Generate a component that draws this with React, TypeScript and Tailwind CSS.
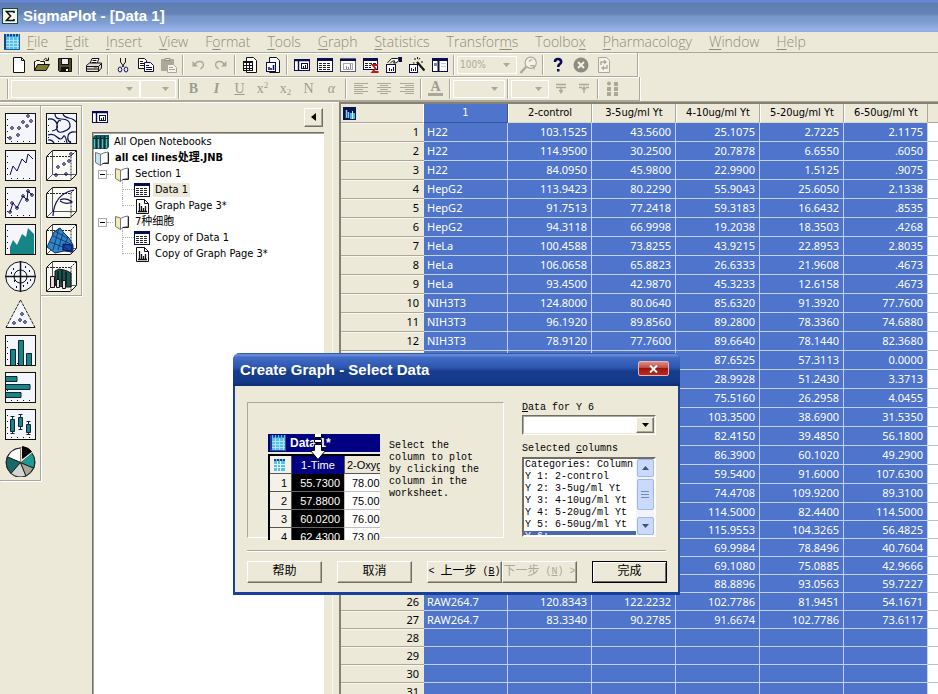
import React from "react";

type Children = { children?: React.ReactNode };

const INK = "#0b0b50";
const TEAL = "#168585";

/* ---------- worksheet data ---------- */

const columns = ["1", "2-control", "3-5ug/ml Yt", "4-10ug/ml Yt", "5-20ug/ml Yt", "6-50ug/ml Yt"];

const rows: string[][] = [
  ["H22", "103.1525", "43.5600", "25.1075", "2.7225", "2.1175"],
  ["H22", "114.9500", "30.2500", "20.7878", "6.6550", ".6050"],
  ["H22", "84.0950", "45.9800", "22.9900", "1.5125", ".9075"],
  ["HepG2", "113.9423", "80.2290", "55.9043", "25.6050", "2.1338"],
  ["HepG2", "91.7513", "77.2418", "59.3183", "16.6432", ".8535"],
  ["HepG2", "94.3118", "66.9998", "19.2038", "18.3503", ".4268"],
  ["HeLa", "100.4588", "73.8255", "43.9215", "22.8953", "2.8035"],
  ["HeLa", "106.0658", "65.8823", "26.6333", "21.9608", ".4673"],
  ["HeLa", "93.4500", "42.9870", "45.3233", "12.6158", ".4673"],
  ["NIH3T3", "124.8000", "80.0640", "85.6320", "91.3920", "77.7600"],
  ["NIH3T3", "96.1920", "89.8560", "89.2800", "78.3360", "74.6880"],
  ["NIH3T3", "78.9120", "77.7600", "89.6640", "78.1440", "82.3680"],
  ["", "", "", "87.6525", "57.3113", "0.0000"],
  ["", "", "", "28.9928", "51.2430", "3.3713"],
  ["", "", "", "75.5160", "26.2958", "4.0455"],
  ["", "", "", "103.3500", "38.6900", "31.5350"],
  ["", "", "", "82.4150", "39.4850", "56.1800"],
  ["", "", "", "86.3900", "60.1020", "49.2900"],
  ["", "", "", "59.5400", "91.6000", "107.6300"],
  ["", "", "", "74.4708", "109.9200", "89.3100"],
  ["", "", "", "114.5000", "82.4400", "114.5000"],
  ["", "", "", "115.9553", "104.3265", "56.4825"],
  ["", "", "", "69.9984", "78.8496", "40.7604"],
  ["", "", "", "69.1080", "75.0885", "42.9666"],
  ["", "", "", "88.8896", "93.0563", "59.7227"],
  ["RAW264.7", "120.8343", "122.2232", "102.7786", "81.9451", "54.1671"],
  ["RAW264.7", "83.3340", "90.2785", "91.6674", "102.7786", "73.6117"],
  ["", "", "", "", "", ""],
  ["", "", "", "", "", ""],
  ["", "", "", "", "", ""],
  ["", "", "", "", "", ""],
];

/* ---------- small icons ---------- */

function Ico({ children, size = 16 }: Children & { size?: number }) {
  return (
    <svg width={size} height={size} viewBox="0 0 16 16" fill="none" stroke="#111" aria-hidden="true" className="shrink-0">
      {children}
    </svg>
  );
}

const SheetGlyph = () => (
  <Ico>
    <rect x="0.5" y="1.5" width="15" height="13" fill="#fff" stroke={INK} />
    <path d="M0 2.5h16M0 3.5h16" stroke={INK} />
    <path d="M2 6.5h12M2 8.5h12M2 10.5h12M2 12.5h12" stroke="#222" strokeDasharray="3 1" />
  </Ico>
);

const GraphPageGlyph = () => (
  <Ico>
    <path d="M2.5 1.500h8l4 4v10h-12z" fill="#fff" />
    <path d="M10.500 1.500v4h4" />
    <path d="M5.500 5v8.500M7.500 8v5M9.500 10v3M11.500 8v5M4 13.500h9" strokeWidth="1.3" />
  </Ico>
);

const BookGlyph = ({ tint }: { tint: string }) => (
  <Ico>
    <path d="M1.500 2.500l5 1.500v11.500l-5-3z" fill={tint} stroke="#777" />
    <path d="M6.500 4.500q3-2 7.500-2.500v10.500q-5 0-7.500 3z" fill="#fff" stroke="#777" />
    <path d="M14.500 2.500v11h-6" stroke="#222" />
  </Ico>
);

const NotebooksGlyph = () => (
  <Ico>
    <path d="M0 3l2-2h14v12l-2 2h-14z" fill="#0f5f60" stroke="none" />
    <path d="M1.500 4v10M5.500 4v10M9.500 4v10M13.500 3v11" stroke="#5fc0c0" />
    <path d="M3.500 2v13M7.500 2v13M11.500 2v13M0 4.500h16" stroke="#062c30" />
  </Ico>
);

const GridGlyph = () => (
  <Ico>
    <rect width="16" height="16" fill="#58bfe8" stroke="none" />
    <path d="M0 1h16" stroke="#1b3f90" strokeWidth="3" strokeDasharray="2 1" />
    <path d="M1 0v16" stroke="#1b3f90" strokeWidth="2" />
    <path d="M5.500 3v13M9.500 3v13M13.500 3v13M2 6.500h14M2 9.500h14M2 12.500h14" stroke="#a8e2f8" />
    <path d="M15.500 0v16M0 15.500h16" stroke="#1d5f9a" />
  </Ico>
);

const PanelGlyph = () => (
  <Ico>
    <rect x="0.5" y="2.500" width="15" height="11" fill="#fff" stroke={INK} />
    <path d="M0 3.500h16M4.500 3v11" stroke={INK} strokeWidth="1.400" />
    <rect x="7.500" y="6.500" width="6" height="5" stroke={INK} />
    <path d="M9.500 11v-2M11.500 11v-3" stroke={INK} />
  </Ico>
);

const icons: Record<string, React.ReactNode> = {
  New: (
    <Ico>
      <path d="M2.500 0.500h8l3 3v12h-11z" fill="#fff" />
      <path d="M10.500 0.500v3h3" />
    </Ico>
  ),
  Open: (
    <Ico>
      <path d="M0.500 13.500v-9h1l1-1h3l1 1h4v3" fill="#fffbe0" />
      <path d="M0.500 13.500l3-6h12l-3.500 6z" fill="#7c7c2c" />
      <path d="M9.500 3q2-3 4-0.500M14.500 0.500v3h-3" />
    </Ico>
  ),
  Save: (
    <Ico>
      <path d="M1.500 1.500h13v13h-12l-1-1z" fill="#4c4c28" />
      <rect x="4.500" y="1.500" width="7" height="6" fill="#eee" />
      <rect x="4.500" y="10.500" width="7" height="4" fill="#111" />
      <path d="M10 12v2" stroke="#fff" strokeWidth="2" />
    </Ico>
  ),
  Print: (
    <Ico>
      <path d="M4 6.500l2-5h7l-2 5" fill="#fff" />
      <path d="M6.500 3.500h4M6 5.500h4" />
      <path d="M0.500 8.500l3-2.500h12v5l-3 3.500h-12z" fill="#ddd" />
      <path d="M0.500 9.500h12l3-3M0.500 12h12M12.500 9.500v5" />
      <path d="M8 10.500h3" stroke="#a89000" />
    </Ico>
  ),
  Cut: (
    <Ico>
      <path d="M5.500 1v4l3.500 5M10.500 1v4l-3.500 5" />
      <ellipse cx="5" cy="12.500" rx="1.800" ry="2.500" stroke="#10107c" />
      <ellipse cx="11" cy="12.500" rx="1.800" ry="2.500" stroke="#10107c" />
    </Ico>
  ),
  Copy: (
    <Ico>
      <path d="M0.500 1.500h6l2 2v8h-8z" fill="#fff" />
      <path d="M2 4.500h3M2 6.500h5M2 8.500h5" />
      <path d="M6.500 5.500h6l3 3v6h-9z" fill="#fff" stroke={INK} />
      <path d="M8 8.500h3M8 10.500h6M8 12.500h6" stroke={INK} />
    </Ico>
  ),
  Paste: (
    <Ico>
      <path d="M0.500 2.500h12v11h-12z" fill="#aca899" stroke="#aca899" />
      <path d="M4 3.500h5v-2h-5z" fill="#ece9d8" stroke="#8f8c80" />
      <path d="M6.500 7.500h6l3 3v5h-9z" fill="#f4f2e8" stroke="#aca899" />
      <path d="M8 10.500h4M8 12.500h6" stroke="#aca899" />
    </Ico>
  ),
  Undo: (
    <Ico>
      <path d="M4.500 9q1-5 6-4.500q4 1 2.500 5l-2.500 2.500" stroke="#aca899" strokeWidth="1.400" />
      <path d="M2.500 4v5.500h5.500z" fill="#aca899" stroke="none" />
    </Ico>
  ),
  Redo: (
    <Ico>
      <path d="M11.500 9q-1-5-6-4.500q-4 1-2.500 5l2.500 2.500" stroke="#aca899" strokeWidth="1.400" />
      <path d="M13.500 4v5.500h-5.500z" fill="#aca899" stroke="none" />
    </Ico>
  ),
  "New worksheet": (
    <Ico>
      <path d="M4.500 0.500h7l3 3v12h-10z" fill="#fff" />
      <rect x="1.500" y="4.500" width="9" height="9" fill="#fff" />
      <path d="M1.500 5.500h9M1.500 8.500h9M1.500 11.500h9M4.500 5v9M7.500 5v9" />
    </Ico>
  ),
  "New graph page": (
    <Ico>
      <path d="M4.500 0.500h7l3 3v12h-10z" fill="#fff" />
      <rect x="1.500" y="5.500" width="9" height="9" fill="#fff" stroke={INK} />
      <path d="M4 13v-3M6 13v-2M8.500 13v-5" stroke={INK} strokeWidth="1.500" />
    </Ico>
  ),
  "View notebook": <PanelGlyph />,
  "View worksheet": <SheetGlyph />,
  "View page": (
    <Ico>
      <rect x="0.500" y="1.500" width="15" height="13" fill="#fff" stroke="#5a5a78" />
      <path d="M0 3h16" stroke={INK} strokeWidth="2" />
      <rect x="3.500" y="6.500" width="9" height="6" stroke="#aaa" />
      <path d="M6.500 12v-3M8.500 12v-2M10.500 12v-5" stroke="#8a8a9c" />
    </Ico>
  ),
  Statistics: (
    <Ico>
      <rect x="0.500" y="1.500" width="14" height="11" fill="#fff" stroke={INK} />
      <path d="M0 2.500h15M0 3.500h15" stroke={INK} />
      <path d="M2 6.500h11M2 8.500h6M2 10.500h6" stroke="#222" strokeDasharray="3 1" />
      <path d="M15 8h-5.500l3 3.500-3 3.500h6" stroke="#c01818" strokeWidth="1.800" />
    </Ico>
  ),
  "Graph properties": (
    <Ico>
      <rect x="0.500" y="7.500" width="9" height="8" fill="#fff" stroke={INK} />
      <path d="M3.500 14v-3M5.500 14v-2M7.500 14v-4" stroke={INK} />
      <path d="M1.500 6l4-4.500h6l2 1.500-3.500 3h-2.500l1.500-2h-2.500l-2.500 2.500" fill="#fff" />
      <path d="M12 0h4v5h-3z" fill={INK} stroke="none" />
    </Ico>
  ),
  "Graph wizard": (
    <Ico>
      <rect x="0.500" y="7.500" width="8" height="8" fill="#fff" stroke={INK} />
      <path d="M2.500 14v-3M4.500 14v-2M6.500 14v-4" stroke={INK} />
      <path d="M8 5l7.500 8.500" strokeWidth="2.200" />
      <path d="M6 1v2M11 1l-1 1.500M4 6h1.500M12 5h2M8.500 0v2" />
    </Ico>
  ),
  "Object window": (
    <Ico>
      <rect x="0.500" y="1.500" width="15" height="13" fill="#fff" stroke={INK} />
      <path d="M0 3h16M6.500 3v12" stroke={INK} strokeWidth="2" />
      <rect x="2" y="6" width="3" height="3" fill="#888" stroke="none" />
      <path d="M9 6.500h5M9 9.500h5" stroke="#c8c8c8" />
    </Ico>
  ),
  Zoom: (
    <Ico size={18}>
      <circle cx="9.500" cy="6" r="5" fill="#f4f2e8" stroke="#aca899" />
      <path d="M5.500 9.500l-5 5.500" stroke="#aca899" strokeWidth="2" />
      <path d="M12.500 12v-3.500h-3.500M8 5q1-2 3-1.500" stroke="#aca899" />
    </Ico>
  ),
  Help: (
    <Ico>
      <path d="M5 5q0-3 3-3t3.200 2.800q0 1.500-1.500 2.400-1.500 1-1.500 2.800" stroke={INK} strokeWidth="2.600" />
      <path d="M7 12h2.500v2.500h-2.500z" fill={INK} stroke="none" />
    </Ico>
  ),
  Stop: (
    <Ico>
      <circle cx="8" cy="8" r="7.500" fill="#8e8b80" stroke="none" />
      <path d="M5 5l6 6M11 5l-6 6" stroke="#f4f2e8" strokeWidth="2" />
    </Ico>
  ),
  Refresh: (
    <Ico>
      <path d="M2.500 0.500h8l3 3v12h-11z" fill="#f4f2e8" stroke="#aca899" />
      <path d="M5 8v-3h4M11 8v3h-4" stroke="#aca899" strokeWidth="1.400" />
      <path d="M8 2.500l3 2.500-3 2.500zM8 8.500v5l-3-2.500z" fill="#aca899" stroke="none" />
    </Ico>
  ),
  "Align left": (
    <Ico>
      <path d="M1 2.500h14M1 4.500h9M1 6.500h14M1 8.500h9M1 10.500h14M1 12.500h9" stroke="#aca899" />
    </Ico>
  ),
  "Align center": (
    <Ico>
      <path d="M1 2.500h14M4 4.500h8M1 6.500h14M4 8.500h8M1 10.500h14M4 12.500h8" stroke="#aca899" />
    </Ico>
  ),
  "Align right": (
    <Ico>
      <path d="M1 2.500h14M6 4.500h9M1 6.500h14M6 8.500h9M1 10.500h14M6 12.500h9" stroke="#aca899" />
    </Ico>
  ),
  "Space below": (
    <Ico>
      <path d="M3 3.500h10M3 6.500h10M8 6v4" stroke="#aca899" strokeWidth="1.300" />
      <path d="M5.500 9h5l-2.500 4z" fill="#aca899" stroke="none" />
    </Ico>
  ),
  "Space above": (
    <Ico>
      <path d="M3 3.500h10M3 6.500h3M10 6.500h3M8 7v5" stroke="#aca899" strokeWidth="1.300" />
      <path d="M5.500 8.500h5l-2.500-4z" fill="#aca899" stroke="none" />
    </Ico>
  ),
  Symbols: (
    <Ico>
      <circle cx="4" cy="2.500" r="2" fill="#aca899" stroke="none" />
      <path d="M9 1h4v4h-4zM2 6h4v4h-4zM9 6h4v4h-4zM2 11h4v4h-4zM9 11h4v4h-4z" fill="#aca899" stroke="none" />
    </Ico>
  ),
};

/* ---------- toolbar parts ---------- */

const Sep = () => (
  <div className="flex w-[6px] shrink-0 justify-center">
    <div className="h-[20px] w-[2px] border-l border-r border-l-[#aca899] border-r-white" />
  </div>
);

const Tool = ({ name }: { name: string }) => (
  <button type="button" aria-label={name} className="flex h-[22px] w-[23px] shrink-0 items-center justify-center">
    {icons[name]}
  </button>
);

const Tools = ({ names }: { names: string[] }) => (
  <>
    {names.map((n) => (
      <Tool key={n} name={n} />
    ))}
  </>
);

const Letter = ({ label, children }: Children & { label: string }) => (
  <button
    type="button"
    disabled
    aria-label={label}
    className="flex h-[22px] w-[23px] shrink-0 items-center justify-center font-['Liberation_Serif',serif] text-[14px] leading-none text-[#9f9c8f]"
  >
    {children}
  </button>
);

const Combo = ({ label, width, value = "" }: { label: string; width: string; value?: string }) => (
  <div className={"relative flex h-[18px] shrink-0 border border-white " + width}>
    <select
      disabled
      aria-label={label}
      className="h-full w-full appearance-none bg-transparent pl-[2px] text-[10px] leading-none text-[#aca899] opacity-100"
    >
      <option>{value}</option>
    </select>
    <svg width="7" height="4" className="pointer-events-none absolute top-[6px] right-[6px]" aria-hidden="true">
      <path d="M0 0h7L3.500 4z" fill="#aca899" />
    </svg>
  </div>
);

const Toolbar = ({ children, width, label }: Children & { width: string; label: string }) => (
  <div
    role="toolbar"
    aria-label={label}
    className={
      "flex h-[24px] items-center border-r border-b border-[#aca899] shadow-[inset_0_1px_0_#fff,1px_0_0_#fff] " + width
    }
  >
    {children}
  </div>
);

/* ---------- menu ---------- */

const menus: [string, string, string][] = [
  ["", "F", "ile"],
  ["", "E", "dit"],
  ["", "I", "nsert"],
  ["", "V", "iew"],
  ["F", "o", "rmat"],
  ["", "T", "ools"],
  ["", "G", "raph"],
  ["", "S", "tatistics"],
  ["Transfor", "m", "s"],
  ["Toolbo", "x", ""],
  ["", "P", "harmacology"],
  ["", "W", "indow"],
  ["", "H", "elp"],
];

/* ---------- graph type palette ---------- */

const Frame = () => (
  <>
    <rect x="0.500" y="0.500" width="30" height="30" fill="#f4f6fb" stroke="#111" />
    <path d="M2 6.500h1M2 12.500h1M2 18.500h1M2 24.500h1M6.500 28v1M12.500 28v1M18.500 28v1M24.500 28v1" stroke="#111" />
  </>
);

const Cube = () => (
  <>
    <path d="M0.500 6.500l6-6h24v24l-6 6h-24z" fill="#fbfbf6" stroke="#111" />
    <path d="M6.500 1v23.500h24M6.500 24.500l-6 6" stroke="#555" />
    <path d="M1 6.500h24v24M24.500 6.500l6-6" stroke="#222" strokeDasharray="2 1" />
  </>
);

const dots = (pts: number[][], r = 1.3) =>
  pts.map(([x, y]) => <circle key={x + "-" + y} cx={x} cy={y} r={r} fill="none" stroke={INK} />);

const palette1: [string, React.ReactNode][] = [
  ["Scatter plot", <><Frame />{dots([[5, 25], [7, 15], [13, 22], [14, 15], [18, 9], [22, 13], [23, 3], [26, 8]])}</>],
  ["Line plot", <><Frame /><path d="M5 25l3-9 4 5 5-12 4 4 2-9 5 5" stroke={INK} /></>],
  ["Line and scatter plot", <><Frame /><path d="M5 25l3-9 4 5 6-12 4 4 1-9 4 4" stroke={INK} />{dots([[5, 25], [7, 16], [12, 21], [18, 9], [22, 13], [23, 4], [27, 8]])}</>],
  ["Area plot", <><Frame /><path d="M5 30V23l3-7 4 5 5-11 4 3 2-9 6 6v20z" fill={TEAL} /></>],
  [
    "Polar plot",
    <>
      <circle cx="15.500" cy="15.500" r="14.800" fill="#f4f6fb" stroke="#111" />
      <circle cx="15.500" cy="15.500" r="6.500" stroke="#111" />
      <path d="M0 15.500h31M15.500 0v31" stroke="#111" strokeWidth="1.500" />
      <path d="M8 8h1M20 6h1M24 10h1M9 20h1M6 12h1M22 22h1M18 25h1M11 26h1M25 19h1" stroke={INK} strokeWidth="1.800" />
    </>,
  ],
  ["Ternary plot", <><path d="M15.500 2L30 29.500H1z" fill="#f4f6fb" stroke="#222" strokeDasharray="3 1" /><path d="M1 29.500h29" stroke="#111" />{dots([[17, 16], [15, 22], [9, 25], [20, 24]])}</>],
  ["Vertical bar chart", <><Frame /><path d="M5.500 30V14.500h5V30M13.500 30V5.500h5V30M21.500 30V18.500h5V30" fill={TEAL} stroke="#123" /></>],
  ["Horizontal bar chart", <><Frame /><path d="M1 4.500h11v5H1M1 12.500h24v5H1M1 20.500h15v5H1" fill={TEAL} stroke="#123" /></>],
  ["Box plot", <><Frame /><path d="M7.500 7v18M15.500 5v15M23.500 12v13M5.500 7.500h4M5.500 24.500h4M13.500 5.500h4M13.500 20.500h4M21.500 12.500h4M21.500 25.500h4" stroke="#123" /><path d="M5.500 10.500h4v12h-4zM13.500 8.500h4v9h-4zM21.500 15.500h4v8h-4z" fill={TEAL} stroke="#123" /></>],
  [
    "Pie chart",
    <>
      <circle cx="15.500" cy="16.500" r="14.500" fill="#fff" stroke="#222" />
      <path d="M15.500 16.500V2Q6 3 2.500 11z" fill="#fff" stroke="#222" />
      <path d="M15.500 16.500L2.500 11Q-1 20 6 27.500z" fill="#17696b" stroke="#222" />
      <path d="M15.500 16.500L6 27.500Q13 33 21 30z" fill="#d4d4d0" stroke="#222" />
      <path d="M15.500 16.500L21 30Q26 27 28.500 22z" fill="#aaa69c" stroke="#222" />
      <path d="M15.500 16.500L28.500 22Q31.500 14 27 7z" fill="#1c9a96" stroke="#222" />
      <path d="M15.500 16.500L27 7Q22 2 15.500 2z" fill="#ece9d8" stroke="none" />
      <path d="M17.500 12.500V0.500q6 1 9 5z" fill="#000" stroke="#000" />
    </>,
  ],
];

const palette2: [string, React.ReactNode][] = [
  [
    "Contour plot",
    <>
      <Frame />
      <path
        d="M2 6q7-1 9 5t-5 7M9 1q0 5 6 5t8 3q3 5-2 8t-8 2-2-7 4-4M17 1q1 3 6 4t7 4M2 22q5-2 9 2t6 0 4 6M30 19q-7-1-8 4t3 7M2 27q4-1 6 3"
        stroke={INK}
        strokeWidth="1.200"
      />
    </>,
  ],
  ["3D scatter plot", <><Cube />{dots([[10, 25], [20, 24], [12, 17], [18, 14], [23, 11], [25, 4]])}</>],
  ["3D line plot", <><Cube /><path d="M7 29q1-22 21-26M14 13q6-3 12 2-6 3-12-1" stroke={INK} strokeWidth="1.200" /></>],
  [
    "Mesh plot",
    <>
      <Cube />
      <path d="M1 23L8 8l6-4 4 5 5 5 4 7v7l-9-1-9 2z" fill="#2f86c0" stroke="#0d2c70" />
      <path d="M17 20l9 1v6l-9-1z" fill="#1846a8" stroke={INK} />
      <path d="M4 18l18 7M7 12l18 8M9 7l12 7M13 4l-6 22M17 9l-5 17M22 13l-5 13" stroke="#0d2c70" strokeWidth="0.800" />
    </>,
  ],
  [
    "3D bar chart",
    <>
      <Cube />
      <path d="M9 24V10l4-2 5 1 3 1 4 2v14h-8z" fill="#1d5350" stroke="#111" />
      <path d="M12 10v12M16 9v13M20 11v13" stroke="#071c1b" strokeWidth="1.500" />
      <path d="M4.500 15.500h4v11h-4zM10.500 18.500h3v8h-3zM16.500 19.500h3v8h-3z" fill="#e9dcd8" stroke="#111" />
    </>,
  ],
];

const Palette = ({ items, label }: { items: [string, React.ReactNode][]; label: string }) => (
  <div
    role="toolbar"
    aria-label={label}
    className="flex w-[41px] flex-col items-center gap-[6px] self-start border-t border-r border-b border-[#aca899] pt-[7px] pb-[3px] shadow-[inset_0_1px_0_#fff,1px_1px_0_#fff]"
  >
    {items.map(([name, art]) => (
      <button key={name} type="button" aria-label={name} className="size-[31px]">
        <svg width="31" height="31" viewBox="0 0 31 31" fill="none" aria-hidden="true">
          {art}
        </svg>
      </button>
    ))}
  </div>
);

/* ---------- notebook tree ---------- */

const Expander = () => (
  <button
    type="button"
    aria-label="Collapse"
    className="flex size-[9px] shrink-0 items-center justify-center border border-[#a9a9a9] bg-white"
  >
    <span className="h-px w-[5px] bg-black" />
  </button>
);

const SectionRow = ({ name }: { name: string }) => (
  <div className="flex h-[16px] items-center pl-[5px]">
    <Expander />
    <span className="mr-px w-[6px] border-t border-dotted border-[#b0b0b0]" />
    <BookGlyph tint="#f2ecb4" />
    <span className="ml-[5px]">{name}</span>
  </div>
);

const LeafRow = ({ name, icon, active, last }: { name: string; icon: React.ReactNode; active?: boolean; last?: boolean }) => (
  <div className="flex h-[16px] items-center pl-[29px]">
    <span className="flex h-full w-[12px] flex-col border-l border-dotted border-[#b0b0b0]">
      <span className="h-[8px] border-b border-dotted border-[#b0b0b0]" />
      {last && <span className="-ml-px h-[8px] bg-white" />}
    </span>
    {icon}
    <span className={active ? "ml-[3px] bg-[#ece9d8] px-[2px] leading-[14px]" : "ml-[5px]"}>{name}</span>
  </div>
);

/* ---------- worksheet ---------- */

const Worksheet = () => (
  <div className="min-w-0 flex-1 overflow-hidden border-t-2 border-l-2 border-[#848174] bg-white">
    <table className="w-[680px] table-fixed border-separate border-spacing-0 text-[11px] leading-[14px]">
      <colgroup>
        <col className="w-[83px]" />
        {columns.map((c) => (
          <col key={c} className="w-[84px]" />
        ))}
        <col />
      </colgroup>
      <thead>
        <tr className="h-[19px]">
          <th className="border-r border-b border-[#aca899] border-r-white bg-[#ece9d8] p-0 pl-[2px]">
            <svg width="13" height="13" aria-hidden="true">
              <rect width="13" height="13" fill="#06164e" />
              <path d="M3.500 3v8M5.500 5v6" stroke="#7fd0f4" strokeWidth="1.500" />
              <path d="M7 6h5v6H7z" fill="#4fb4ec" />
              <path d="M9.500 4v8" stroke="#c8f0ff" />
            </svg>
          </th>
          {columns.map((c, i) => (
            <th
              key={c}
              scope="col"
              className={
                i === 0
                  ? "border-r border-b border-[#3a5698] bg-[#4e74cc] p-0 font-normal text-white"
                  : "border-r border-b border-l border-[#aca899] border-b-[#dad6c6] border-l-white bg-[#ece9d8] p-0 text-center font-normal text-black"
              }
            >
              {c}
            </th>
          ))}
          <th className="border-b border-[#aca899] bg-[#ece9d8] p-0" />
        </tr>
      </thead>
      <tbody className="font-['Noto_Sans',sans-serif]">
        {rows.map((r, i) => (
          <tr key={i} className={i < 20 ? "h-[19px]" : "h-[18px]"}>
            <th
              scope="row"
              className="border-b border-[#aca899] bg-[#ece9d8] p-0 pr-[5px] text-right font-normal text-black shadow-[inset_0_1px_0_#f8f7f0]"
            >
              {i + 1}
            </th>
            {r.map((v, j) => (
              <td
                key={j}
                className={
                  j === 0
                    ? "border-r border-b border-[#c3d0f0] bg-[#4e74cc] p-0 pl-[3px] text-left text-white"
                    : "border-r border-b border-[#c3d0f0] bg-[#4e74cc] p-0 pr-[4px] text-right text-white"
                }
              >
                {v}
              </td>
            ))}
            <td className="border-b border-[#c0c0c0] p-0" />
          </tr>
        ))}
      </tbody>
    </table>
  </div>
);

/* ---------- dialog ---------- */

const raised =
  "border border-t-white border-l-white border-r-[#716f64] border-b-[#716f64] bg-[#ece9d8] shadow-[inset_-1px_-1px_0_#aca899]";

const DialogButton = ({ children, disabled, primary }: Children & { disabled?: boolean; primary?: boolean }) => (
  <button
    type="button"
    disabled={disabled}
    className={
      "flex h-[22px] w-[75px] shrink-0 items-center justify-center text-[10px] leading-none whitespace-pre " +
      (primary ? "border border-black bg-[#ece9d8] shadow-[inset_1px_1px_0_#fff,inset_-1px_-1px_0_#716f64]" : raised) +
      (disabled ? " text-[#aca899]" : " text-black")
    }
  >
    {children}
  </button>
);

const Han = ({ children }: Children) => <span className="text-[12px]">{children}</span>;

const sampleRows = [
  ["1", "55.7300", "78.00"],
  ["2", "57.8800", "75.00"],
  ["3", "60.0200", "76.00"],
  ["4", "62.4300", "73.00"],
];

const Sample = () => (
  <div className="relative mt-[31px] ml-[20px] h-[106px] w-[112px] shrink-0 overflow-hidden font-['Liberation_Sans',Arial,sans-serif] text-[12px]">
    <div className="flex h-[18px] items-center gap-[4px] bg-[#000080] pl-[2px] font-bold text-white">
      <GridGlyph />
      Data 1*
    </div>
    <table className="mt-[2px] w-[120px] table-fixed border-separate border-spacing-0 border-t-2 border-l-2 border-black text-[11px] leading-[14px]">
      <colgroup>
        <col className="w-[22px]" />
        <col className="w-[52px]" />
        <col />
      </colgroup>
      <thead>
        <tr className="h-[18px]">
          <th className="border-r border-b border-[#555] bg-[#f4f2e8] p-0 pl-[4px]">
            <svg width="11" height="12" aria-hidden="true">
              <rect width="11" height="12" fill="#58bfe8" />
              <path d="M0 1h11" stroke="#1b3f90" strokeWidth="2" strokeDasharray="2 1" />
              <path d="M3.500 2v10M6.500 2v10M0 5.500h11M0 8.500h11" stroke="#e3f7ff" />
            </svg>
          </th>
          <th className="bg-[#000080] p-0 text-center font-normal text-white">1-Time</th>
          <th className="border-b border-l border-[#555] bg-[#ece9d8] p-0 pl-[2px] text-left font-normal whitespace-nowrap">2-Oxyg</th>
        </tr>
      </thead>
      <tbody>
        {sampleRows.map(([n, a, b]) => (
          <tr key={n} className="h-[18px]">
            <th className="border-r border-b border-[#555] bg-[#f4f2e8] p-0 pr-[4px] text-right font-normal">{n}</th>
            <td className="border-b border-[#666] bg-black p-0 pr-[4px] text-right text-white">{a}</td>
            <td className="border-b border-l border-[#c0c0c0] bg-white p-0 pl-[7px] text-left">{b}</td>
          </tr>
        ))}
      </tbody>
    </table>
    <svg width="16" height="28" viewBox="0 0 16 28" className="absolute -top-[1px] left-[42px]" aria-hidden="true">
      <path d="M4.500 0.500h7v4h-7zM4.500 6.500h7v3h-7z" fill="#fff" stroke="#000" />
      <path d="M4.500 11.500h7v6h4l-7.500 9-7.500-9h4z" fill="#fff" stroke="#000" />
    </svg>
  </div>
);

const selected = [
  "Categories: Column",
  "Y 1: 2-control",
  "Y 2: 3-5ug/ml Yt",
  "Y 3: 4-10ug/ml Yt",
  "Y 4: 5-20ug/ml Yt",
  "Y 5: 6-50ug/ml Yt",
  "Y 6:",
];

const xpThumb = "flex w-[17px] items-center justify-center rounded-[2px] border border-[#9db8f0] bg-[#cbdafc]";

const Dialog = () => (
  <section
    role="dialog"
    aria-labelledby="dialog-title"
    className="absolute top-[353px] left-[233px] flex w-[447px] flex-col rounded-t-[7px] border-2 border-t-0 border-b-[3px] border-[#16409c] bg-[#ece9d8] font-['Liberation_Mono','Noto_Sans_CJK_SC',monospace] text-[10px] leading-[12px] text-black"
  >
    <header className="-mx-[2px] flex h-[33px] items-center justify-between rounded-t-[7px] bg-[linear-gradient(180deg,#1c3f94_0%,#6d92dd_5%,#426bc4_14%,#2c55b0_45%,#173c8c_55%,#15398a_88%,#0f2c70_100%)] pr-[11px] pl-[7px]">
      <h2 id="dialog-title" className="font-['Liberation_Sans',Arial,sans-serif] text-[15px] font-bold text-white">
        Create Graph - Select Data
      </h2>
      <button
        type="button"
        aria-label="Close"
        className="mb-[2px] flex h-[15px] w-[31px] items-center justify-center rounded-[2px] border border-[#e8b8b0] bg-[linear-gradient(180deg,#d89088_0%,#c04840_45%,#a01410_50%,#b82c20_100%)]"
      >
        <svg width="9" height="8" aria-hidden="true">
          <path d="M1 0.500l7 7M8 0.500l-7 7" stroke="#fff" strokeWidth="2" />
        </svg>
      </button>
    </header>

    <div className="flex gap-[18px] px-[12px] pt-[16px]">
      <div className="flex h-[136px] w-[257px] shrink-0 border border-[#aca899] border-r-white border-b-white">
        <Sample />
        <p className="mt-[37px] ml-[9px] w-[100px]">Select the column to plot by clicking the column in the worksheet.</p>
      </div>

      <div className="flex w-[134px] flex-col">
        <label htmlFor="data-for">
          <u>D</u>ata for Y 6
        </label>
        <div className="relative mt-px h-[20px] border border-[#716f64] border-r-white border-b-white bg-white">
          <select id="data-for" className="h-full w-full appearance-none border border-[#aca899] border-r-[#ece9d8] border-b-[#ece9d8] bg-white pl-[2px]" />
          <span className={"pointer-events-none absolute top-px right-px flex h-[16px] w-[18px] items-center justify-center " + raised}>
            <svg width="7" height="4" aria-hidden="true">
              <path d="M0 0h7L3.500 4z" fill="#000" />
            </svg>
          </span>
        </div>
        <label htmlFor="selected-columns" className="mt-[8px]">
          Selected <u>c</u>olumns
        </label>
        <div className="mt-[2px] flex h-[80px] overflow-hidden border-2 border-[#716f64] border-r-white border-b-white bg-white">
          <select
            id="selected-columns"
            size={7}
            defaultValue="Y 6:"
            className="h-[86px] min-w-0 flex-1 appearance-none overflow-hidden bg-white p-0 text-[10px] leading-[12px]"
          >
            {selected.map((s) => (
              <option
                key={s}
                className="h-[12px] min-h-0 overflow-hidden p-0 pl-px text-[10px] leading-[12px] text-black checked:bg-[linear-gradient(#4a68ac,#4a68ac)] checked:text-white"
              >
                {s}
              </option>
            ))}
          </select>
          <div className="flex w-[18px] flex-col items-center bg-[#f3f4f8]">
            <span className={xpThumb + " h-[18px]"}>
              <svg width="7" height="4" aria-hidden="true">
                <path d="M0 4h7L3.500 0z" fill="#39537c" />
              </svg>
            </span>
            <span className={xpThumb + " mt-[2px] h-[31px]"}>
              <svg width="8" height="8" aria-hidden="true">
                <path d="M0 0.500h8M0 3.500h8M0 6.500h8" stroke="#6f8cc8" />
              </svg>
            </span>
            <span className={xpThumb + " mt-auto h-[18px]"}>
              <svg width="7" height="4" aria-hidden="true">
                <path d="M0 0h7L3.500 4z" fill="#39537c" />
              </svg>
            </span>
          </div>
        </div>
      </div>
    </div>

    <hr className="mx-[12px] mt-[12px] h-[2px] border-t border-b border-t-[#aca899] border-b-white" />

    <footer className="flex gap-[15px] px-[12px] pt-[9px] pb-[9px]">
      <DialogButton>
        <Han>帮助</Han>
      </DialogButton>
      <DialogButton>
        <Han>取消</Han>
      </DialogButton>
      <div className="flex">
        <DialogButton>
          {"< "}
          <Han>上一步</Han>
          {" ("}
          <u>B</u>)
        </DialogButton>
        <DialogButton disabled>
          <Han>下一步</Han>
          {" ("}
          <u>N</u>
          {") >"}
        </DialogButton>
      </div>
      <DialogButton primary>
        <Han>完成</Han>
      </DialogButton>
    </footer>
  </section>
);

/* ---------- application window ---------- */

export default function App() {
  return (
    <div className="relative flex h-screen w-full flex-col overflow-hidden bg-[#ece9d8] font-['DejaVu_Sans_Condensed','Noto_Sans_CJK_SC',sans-serif] text-[11px] text-black">
      <header className="flex h-[32px] shrink-0 items-center gap-[5px] bg-[linear-gradient(180deg,#6687d6_0px,#6687d6_2px,#5f7db0_3px,#6584b6_14px,#7796c6_16px,#7d9cd0_22px,#9ab2ea_30px,#8fa8e0_32px)] pl-[2px]">
        <svg width="16" height="16" aria-hidden="true">
          <rect x="0.500" y="0.500" width="15" height="15" fill="#f4f4ea" stroke="#0b4a4a" />
          <path d="M12 5V3.500H4.500L8.500 8l-4 4.500H12V11" fill="none" stroke="#111" strokeWidth="1.600" />
        </svg>
        <h1 className="font-['Liberation_Sans',Arial,sans-serif] text-[15px] font-bold text-white">SigmaPlot - [Data 1]</h1>
      </header>

      <nav className="flex h-[21px] shrink-0 items-center gap-[17px] border-b border-[#aca899] pl-[4px] font-['Open_Sans',sans-serif] text-[14px] font-light text-[#8f8c7e]">
        <span className="-mr-[10px]">
          <GridGlyph />
        </span>
        {menus.map(([a, u, b]) => (
          <button key={a + u + b} type="button" className="leading-none whitespace-nowrap">
            {a}
            <u className="underline-offset-2">{u}</u>
            {b}
          </button>
        ))}
      </nav>

      <Toolbar width="w-[638px] pl-[7px]" label="Standard">
        <Tools names={["New", "Open", "Save"]} />
        <Sep />
        <Tools names={["Print"]} />
        <Sep />
        <Tools names={["Cut", "Copy", "Paste"]} />
        <Sep />
        <Tools names={["Undo", "Redo"]} />
        <Sep />
        <Tools names={["New worksheet", "New graph page"]} />
        <Sep />
        <Tools
          names={["View notebook", "View worksheet", "View page", "Statistics", "Graph properties", "Graph wizard", "Object window"]}
        />
        <Sep />
        <Combo label="Zoom level" width="w-[60px]" value="100%" />
        <Tools names={["Zoom"]} />
        <Sep />
        <Tools names={["Help", "Stop", "Refresh"]} />
      </Toolbar>

      <Toolbar width="w-[640px] pl-[5px]" label="Formatting">
        <Sep />
        <Combo label="Font" width="w-[129px]" />
        <Combo label="Font size" width="w-[36px]" />
        <Sep />
        <Letter label="Bold">
          <b>B</b>
        </Letter>
        <Letter label="Italic">
          <b>
            <i>I</i>
          </b>
        </Letter>
        <Letter label="Underline">
          <u>U</u>
        </Letter>
        <Letter label="Superscript">
          <span>
            x<sup className="text-[9px]">2</sup>
          </span>
        </Letter>
        <Letter label="Subscript">
          <span>
            x<sub className="text-[9px]">2</sub>
          </span>
        </Letter>
        <Letter label="Normal">N</Letter>
        <Letter label="Greek">
          <i>α</i>
        </Letter>
        <Sep />
        <Tools names={["Align left", "Align center", "Align right"]} />
        <Sep />
        <Letter label="Text color">
          <b className="border-b-[3px] border-[#aca899] px-[2px] leading-[12px]">A</b>
        </Letter>
        <Sep />
        <Combo label="Line spacing" width="w-[52px]" />
        <Sep />
        <Combo label="Indent" width="w-[38px]" />
        <Tools names={["Space below", "Space above"]} />
        <Sep />
        <Tools names={["Symbols"]} />
      </Toolbar>

      <main className="flex min-h-0 flex-1 border-t border-[#aca899] shadow-[inset_0_1px_0_#fff]">
        <aside className="flex w-[84px] shrink-0 pt-[3px]">
          <Palette items={palette1} label="2D graphs" />
          <Palette items={palette2} label="3D graphs" />
        </aside>

        <section aria-label="Notebook" className="flex w-[249px] shrink-0 flex-col border-r border-[#f8f7f0] pr-[8px] pl-[8px]">
          <div className="flex h-[30px] items-center justify-between pr-px">
            <PanelGlyph />
            <button type="button" aria-label="Collapse notebook" className={"flex size-[19px] items-center justify-center " + raised}>
              <svg width="5" height="8" aria-hidden="true">
                <path d="M5 0v8L0 4z" fill="#000" />
              </svg>
            </button>
          </div>
          <div className="flex flex-1 flex-col border-t border-l border-[#716f64] bg-white pt-px shadow-[inset_1px_1px_0_#aca899]">
            <div className="flex h-[16px] items-center">
              <NotebooksGlyph />
              <span className="ml-[5px]">All Open Notebooks</span>
            </div>
            <div className="flex h-[16px] items-center pl-px">
              <BookGlyph tint="#bfe6f0" />
              <b className="ml-[5px] whitespace-nowrap">all cel lines处理.JNB</b>
            </div>
            <SectionRow name="Section 1" />
            <LeafRow name="Data 1" icon={<SheetGlyph />} active />
            <LeafRow name="Graph Page 3*" icon={<GraphPageGlyph />} last />
            <SectionRow name="7种细胞" />
            <LeafRow name="Copy of Data 1" icon={<SheetGlyph />} />
            <LeafRow name="Copy of Graph Page 3*" icon={<GraphPageGlyph />} last />
          </div>
        </section>

        <div className="w-[6px] shrink-0" />
        <Worksheet />
      </main>

      <Dialog />
    </div>
  );
}
